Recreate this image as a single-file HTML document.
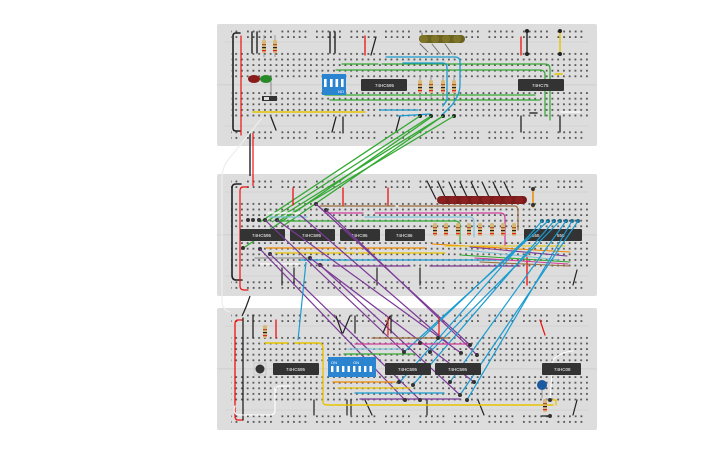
<!DOCTYPE html>
<html><head><meta charset="utf-8"><style>
html,body{margin:0;padding:0;background:#fff;width:725px;height:453px;overflow:hidden}
svg{display:block}
text{font-family:"Liberation Sans",sans-serif}
</style></head><body>
<svg width="725" height="453" viewBox="0 0 725 453" xmlns="http://www.w3.org/2000/svg">
<defs>
<pattern id="h" x="230" y="0" width="5.75" height="5.6" patternUnits="userSpaceOnUse">
<rect x="1" y="1" width="1.8" height="1.8" fill="#555"/></pattern>
<pattern id="r" x="236" y="0" width="34.5" height="5.6" patternUnits="userSpaceOnUse">
<rect x="1" y="1" width="1.8" height="1.8" fill="#555"/><rect x="6.75" y="1" width="1.8" height="1.8" fill="#555"/><rect x="12.5" y="1" width="1.8" height="1.8" fill="#555"/><rect x="18.25" y="1" width="1.8" height="1.8" fill="#555"/><rect x="24" y="1" width="1.8" height="1.8" fill="#555"/></pattern>
<g id="board">
<rect x="0" y="0" width="380" height="122" rx="2" fill="#dddddd"/>
<rect x="0" y="60" width="380" height="1.5" fill="#d4d4d4"/>
<rect x="14" y="6" width="356" height="11" fill="url(#r)"/>
<rect x="14" y="28" width="360" height="28" fill="url(#h)"/>
<rect x="14" y="66" width="360" height="28" fill="url(#h)"/>
<rect x="14" y="104" width="356" height="11" fill="url(#r)"/>
<line x1="8" y1="18" x2="372" y2="18" stroke="#ccc" stroke-width="0.6"/>
<line x1="8" y1="102" x2="372" y2="102" stroke="#ccc" stroke-width="0.6"/>
</g>
<g id="chip"><rect x="0" y="0" width="40" height="12" rx="1" fill="#333"/><circle cx="3" cy="9.5" r="0.9" fill="#ccc"/></g>
<g id="res1"><rect x="262" y="40" width="4" height="13" rx="1.5" fill="#d8b878"/><rect x="262" y="44" width="4" height="1.2" fill="#a52"/><rect x="262" y="47" width="4" height="1.2" fill="#222"/><rect x="262" y="50" width="4" height="1.2" fill="#d22"/></g>
</defs>

<use href="#board" x="217" y="24"/>
<use href="#board" x="217" y="174"/>
<use href="#board" x="217" y="308"/>

<!-- ========== Board 1 ========== -->
<g fill="none" stroke-linecap="round">
<path d="M240 33 H236 Q233 33 233 36 V128 Q233 131 236 131 H240" stroke="#222" stroke-width="1.6"/>
<line x1="241" y1="36" x2="241" y2="135" stroke="#e11" stroke-width="1.2"/>
<line x1="252" y1="32" x2="252" y2="53" stroke="#222" stroke-width="1.4"/>
<line x1="257" y1="32" x2="257" y2="53" stroke="#222" stroke-width="1.4"/>
<line x1="330" y1="32" x2="330" y2="53" stroke="#222" stroke-width="1.4"/>
<line x1="335" y1="32" x2="335" y2="53" stroke="#222" stroke-width="1.4"/>
<line x1="365" y1="36" x2="365" y2="55" stroke="#e11" stroke-width="1.3"/>
<line x1="376" y1="37" x2="371" y2="55" stroke="#222" stroke-width="1.3"/>
<line x1="521" y1="37" x2="521" y2="55" stroke="#e11" stroke-width="1.3"/>
<line x1="527" y1="31" x2="527" y2="54" stroke="#222" stroke-width="1.4"/>
<line x1="560" y1="31" x2="560" y2="54" stroke="#e8c400" stroke-width="1.4"/>
<line x1="271" y1="117" x2="276" y2="130" stroke="#222" stroke-width="1.3"/>
<line x1="336" y1="117" x2="332" y2="132" stroke="#222" stroke-width="1.3"/>
<line x1="343" y1="117" x2="343" y2="133" stroke="#222" stroke-width="1.3"/>
<line x1="400" y1="116" x2="396" y2="131" stroke="#222" stroke-width="1.3"/>
<line x1="521" y1="116" x2="521" y2="132" stroke="#222" stroke-width="1.3"/>
<line x1="560" y1="116" x2="560" y2="132" stroke="#222" stroke-width="1.3"/>
<path d="M342 64 H378 M382 64 H545 Q550 64 550 69 V120" stroke="#3a3" stroke-width="1.2"/>
<path d="M336 70 H540 Q545 70 545 75 V116" stroke="#3a3" stroke-width="1.2"/>
<path d="M325 95 H535" stroke="#3a3" stroke-width="1.2"/>
<path d="M330 100 H540" stroke="#3a3" stroke-width="1.2"/>
<path d="M386 57 H455 Q460 57 460 62 V85 Q460 94 452 105 L442 115" stroke="#1a9bd0" stroke-width="1.3"/>
<path d="M403 63 H443 Q447 63 447 68 V100 L443 106" stroke="#1a9bd0" stroke-width="1.3"/>
<path d="M380 110 H418" stroke="#1a9bd0" stroke-width="1.3"/>
<path d="M398 116 L430 114" stroke="#1a9bd0" stroke-width="1.3"/>
<path d="M253 112 H365" stroke="#e8c400" stroke-width="1.6"/>
<path d="M422 33 L422 38 L428 38 M420 44 L428 52 M432 44 L440 54 M445 44 L452 54" stroke="#777" stroke-width="1"/>
<path d="M561 112 H580" stroke="#fff" stroke-width="1.3"/>
<path d="M555 74 H562" stroke="#e8c400" stroke-width="1.6"/>
<path d="M530 113 H537" stroke="#333" stroke-width="1.6"/>
<path d="M271 82 V95" stroke="#888" stroke-width="1"/>
</g>
<g fill="#6b6420"><rect x="419" y="35" width="46" height="8" rx="4"/></g>
<g fill="#7f7528"><circle cx="424" cy="39" r="4"/><circle cx="435" cy="39" r="4"/><circle cx="446" cy="39" r="4"/><circle cx="457" cy="39" r="4"/></g>
<g fill="#222"><circle cx="527" cy="31" r="2"/><circle cx="527" cy="54" r="2"/><circle cx="560" cy="31" r="2"/><circle cx="560" cy="54" r="2"/>
<circle cx="420" cy="116" r="2"/><circle cx="431" cy="116" r="2"/><circle cx="443" cy="116" r="2"/><circle cx="454" cy="116" r="2"/></g>
<ellipse cx="254" cy="79" rx="6" ry="4" fill="#8a1c1c"/>
<ellipse cx="266" cy="79" rx="6" ry="4" fill="#2a8a2a"/>
<rect x="262" y="96" width="15" height="5" fill="#333"/><rect x="264" y="97" width="5" height="3" fill="#ddd"/>
<rect x="322" y="74" width="24" height="21" fill="#2b84d0"/>
<g fill="#fff"><rect x="324" y="79" width="2.6" height="8"/><rect x="330" y="79" width="2.6" height="8"/><rect x="335.5" y="79" width="2.6" height="8"/><rect x="341" y="79" width="2.6" height="8"/></g>
<text x="338" y="93" font-size="4" fill="#fff">NO</text>
<rect x="361" y="79" width="46" height="12" rx="1" fill="#333"/><text x="375" y="87" font-size="4.5" fill="#fff">74HC595</text>
<rect x="518" y="79" width="46" height="12" rx="1" fill="#333"/><text x="532" y="87" font-size="4.5" fill="#fff">74HC75</text>
<g stroke="#888" stroke-width="0.8"><line x1="264" y1="35" x2="264" y2="57"/><line x1="275" y1="35" x2="275" y2="57"/><line x1="420" y1="75" x2="420" y2="98"/><line x1="431" y1="75" x2="431" y2="98"/><line x1="443" y1="75" x2="443" y2="98"/><line x1="454" y1="75" x2="454" y2="98"/></g>
<use href="#res1"/>
<use href="#res1" x="11" y="0"/>
<use href="#res1" x="156" y="40"/><use href="#res1" x="167" y="40"/><use href="#res1" x="179" y="40"/><use href="#res1" x="190" y="40"/>
<use href="#res1" x="1" y="285"/>

<g fill="none">
<path d="M250 133 V176" stroke="#222" stroke-width="1.4"/>
<path d="M253 133 V186" stroke="#e11" stroke-width="1.2"/>
<path d="M262 118 L228 160 Q222 168 222 178 V300 Q222 310 230 312" stroke="#eee" stroke-width="1.2"/>
<path d="M250 296 Q246 308 242 316" stroke="#222" stroke-width="1.2"/>
<g stroke="#3a3" stroke-width="1.3"><path d="M420 116 L260 222"/><path d="M431 116 L266 222"/><path d="M443 116 L272 222"/><path d="M454 116 L277 222"/><path d="M443 116 L283 226"/><path d="M430 118 L245 247"/></g>
</g>

<!-- ========== Board 2 ========== -->
<g fill="none" stroke-linecap="round">
<path d="M241 184 H236 Q232 184 232 188 V275 Q232 280 236 280 H242" stroke="#222" stroke-width="1.6"/>
<path d="M248 187 H243 Q240 187 240 191 V286 Q240 290 244 290 H248" stroke="#e11" stroke-width="1.2"/>
<g stroke="#e11" stroke-width="1.3"><line x1="293" y1="188" x2="293" y2="205"/><line x1="343" y1="188" x2="343" y2="206"/><line x1="388" y1="188" x2="388" y2="205"/><line x1="527" y1="256" x2="527" y2="285"/></g>
<g stroke="#222" stroke-width="1.2"><line x1="427" y1="181" x2="436" y2="199"/><line x1="438" y1="182" x2="446" y2="199"/><line x1="449" y1="182" x2="457" y2="199"/><line x1="460" y1="182" x2="468" y2="199"/><line x1="471" y1="182" x2="479" y2="199"/><line x1="482" y1="182" x2="490" y2="199"/><line x1="493" y1="182" x2="501" y2="199"/><line x1="504" y1="182" x2="512" y2="199"/>
<line x1="282" y1="268" x2="282" y2="285"/><line x1="294" y1="268" x2="294" y2="285"/><line x1="377" y1="268" x2="377" y2="285"/><line x1="420" y1="268" x2="420" y2="285"/><line x1="577" y1="270" x2="573" y2="285"/></g>
<path d="M533 189 V207" stroke="#f08a00" stroke-width="1.5"/>
<path d="M320 206 H395 M399 206 H515 Q518 206 518 212 V230" stroke="#9a6b3c" stroke-width="1.2"/>
<path d="M325 213 H363 M375 213 H500 Q505 213 505 218 V245" stroke="#d23c9c" stroke-width="1.2"/>
<path d="M268 213 H300" stroke="#fff" stroke-width="1.2"/>
<path d="M270 217 H307 M365 217 H470 Q474 217 474 222 V237" stroke="#7fc4d8" stroke-width="1.2"/>
<path d="M278 221 H352 M355 221 H455 Q460 221 460 226 V242" stroke="#3a3" stroke-width="1.2"/>
<path d="M266 248 H345 M350 248 H425" stroke="#f08a00" stroke-width="1.2"/>
<path d="M275 253 H355 M358 253 H445" stroke="#e8c400" stroke-width="1.2"/>
<path d="M255 258 H310" stroke="#999" stroke-width="1.2"/>
<path d="M260 264 H300" stroke="#fff" stroke-width="1.2"/>
<path d="M333 266 H410 M430 266 H520" stroke="#7b3a96" stroke-width="1.2"/>
<path d="M300 260 H510" stroke="#1a9bd0" stroke-width="1.2"/>
<g stroke-width="1.1"><path d="M432 244 L570 252" stroke="#f08a00"/><path d="M445 246 L565 246" stroke="#e8c400"/><path d="M470 247 L567 256" stroke="#7b3a96"/><path d="M460 255 L570 262" stroke="#3a3"/><path d="M475 258 L568 264" stroke="#d23c9c"/><path d="M480 262 L570 266" stroke="#9a6b3c"/><path d="M465 250 L560 260" stroke="#7fc4d8"/></g>
</g>
<rect x="437" y="196" width="90" height="8" rx="4" fill="#7a1c1c"/>
<g fill="#8a2020"><circle cx="442" cy="200" r="4"/><circle cx="453" cy="200" r="4"/><circle cx="464" cy="200" r="4"/><circle cx="475" cy="200" r="4"/><circle cx="486" cy="200" r="4"/><circle cx="497" cy="200" r="4"/><circle cx="508" cy="200" r="4"/><circle cx="519" cy="200" r="4"/></g>
<use href="#res1" x="171" y="183"/><use href="#res1" x="182" y="183"/><use href="#res1" x="194" y="183"/><use href="#res1" x="205" y="183"/><use href="#res1" x="216" y="183"/><use href="#res1" x="228" y="183"/><use href="#res1" x="239" y="183"/><use href="#res1" x="250" y="183"/>
<rect x="240" y="229" width="45" height="12" rx="1" fill="#333"/><text x="252" y="237" font-size="4.5" fill="#fff">74HC595</text>
<rect x="290" y="229" width="45" height="12" rx="1" fill="#333"/><text x="302" y="237" font-size="4.5" fill="#fff">74HC595</text>
<rect x="340" y="229" width="40" height="12" rx="1" fill="#333"/><text x="351" y="237" font-size="4.5" fill="#fff">74HC86</text>
<rect x="385" y="229" width="40" height="12" rx="1" fill="#333"/><text x="396" y="237" font-size="4.5" fill="#fff">74HC86</text>
<rect x="524" y="229" width="58" height="12" rx="1" fill="#333"/><text x="532" y="237" font-size="4.5" fill="#fff">555</text><text x="557" y="237" font-size="4.5" fill="#fff">558</text>
<g fill="#333"><circle cx="533" cy="189" r="2"/><circle cx="533" cy="205" r="2"/>
<circle cx="248" cy="220" r="2"/><circle cx="253" cy="220" r="2"/><circle cx="259" cy="220" r="2"/><circle cx="265" cy="220" r="2"/><circle cx="277" cy="220" r="2"/><circle cx="316" cy="204" r="2"/><circle cx="326" cy="210" r="2"/>
<circle cx="243" cy="248" r="2"/><circle cx="260" cy="249" r="2"/><circle cx="270" cy="254" r="2"/><circle cx="310" cy="258" r="2"/><circle cx="320" cy="265" r="2"/></g>
<g fill="#1a6a8a"><circle cx="542" cy="221" r="2"/><circle cx="548" cy="221" r="2"/><circle cx="554" cy="221" r="2"/><circle cx="560" cy="221" r="2"/><circle cx="566" cy="221" r="2"/><circle cx="572" cy="221" r="2"/><circle cx="578" cy="221" r="2"/></g>

<g fill="none" stroke-width="1.2">
<g stroke="#7b3a96"><path d="M316 204 L470 345"/><path d="M326 210 L477 355"/><path d="M277 220 L461 353"/><path d="M260 249 L405 400"/><path d="M270 254 L420 400"/><path d="M310 258 L474 382"/><path d="M320 265 L460 395"/><path d="M265 220 L404 352"/><path d="M300 215 L450 345"/></g>
<g stroke="#1a9bd0"><path d="M542 221 L399 383"/><path d="M548 221 L404 352"/><path d="M554 221 L413 385"/><path d="M560 221 L430 352"/><path d="M566 221 L450 382"/><path d="M572 221 L467 400"/><path d="M578 221 L460 395"/><path d="M530 235 L420 340"/><path d="M306 262 L298 340"/></g>
</g>

<!-- ========== Board 3 ========== -->
<g fill="none" stroke-linecap="round">
<path d="M242 320 H238 Q235 320 235 324 V416 Q235 420 238 420 H243" stroke="#e11" stroke-width="1.3"/>
<line x1="243" y1="318" x2="243" y2="420" stroke="#222" stroke-width="1.3"/>
<line x1="253" y1="315" x2="253" y2="338" stroke="#222" stroke-width="1.3"/>
<line x1="276" y1="320" x2="276" y2="338" stroke="#e11" stroke-width="1.3"/>
<g stroke="#222" stroke-width="1.2"><line x1="336" y1="316" x2="342" y2="333"/><line x1="350" y1="316" x2="343" y2="333"/><line x1="355" y1="316" x2="355" y2="333"/><line x1="391" y1="316" x2="391" y2="333"/>
<line x1="314" y1="400" x2="314" y2="415"/><line x1="347" y1="400" x2="347" y2="415"/><line x1="351" y1="400" x2="351" y2="415"/><line x1="365" y1="400" x2="372" y2="415"/><line x1="427" y1="400" x2="427" y2="415"/><line x1="478" y1="400" x2="484" y2="415"/><line x1="577" y1="400" x2="573" y2="415"/><line x1="390" y1="316" x2="383" y2="333"/></g>
<g stroke="#e11" stroke-width="1.2"><line x1="388" y1="318" x2="388" y2="335"/><line x1="439" y1="318" x2="439" y2="335"/><line x1="540" y1="320" x2="545" y2="335"/></g>
<path d="M265 343 H288 M295 343 H318 Q323 343 323 348 V402 Q323 405 328 405 H553" stroke="#e8c400" stroke-width="1.4"/>
<path d="M372 338 H450" stroke="#9a6b3c" stroke-width="1.3"/>
<path d="M355 344 H470" stroke="#d23c9c" stroke-width="1.3"/>
<path d="M348 349 H400" stroke="#7fc4d8" stroke-width="1.3"/>
<path d="M344 354 H415" stroke="#3a3" stroke-width="1.3"/>
<path d="M333 382 H395" stroke="#f08a00" stroke-width="1.3"/>
<path d="M338 388 H410" stroke="#e8c400" stroke-width="1.3"/>
<path d="M355 393 H444" stroke="#1a9bd0" stroke-width="1.3"/>
<path d="M360 399 H460" stroke="#7b3a96" stroke-width="1.3"/>
<path d="M276 390 Q276 386 280 386 H290 M235 406 Q232 415 240 415 H270 Q275 415 275 410 V387" stroke="#fff" stroke-width="1.1"/>
<path d="M573 351 Q560 352 553 360 L550 400" stroke="#fff" stroke-width="1"/>
<path d="M549 400 H556 V405" stroke="#e8c400" stroke-width="1.3"/>
<path d="M542 416 H550" stroke="#222" stroke-width="1.3"/>
</g>
<circle cx="260" cy="369" r="4.5" fill="#333"/><rect x="254" y="363" width="12" height="12" fill="none" stroke="#bbb" stroke-width="0.6"/>
<rect x="273" y="363" width="46" height="12" rx="1" fill="#333"/><text x="286" y="371" font-size="4.5" fill="#fff">74HC595</text>
<rect x="328" y="357" width="48" height="20" fill="#2b84d0"/>
<text x="331" y="364" font-size="4" fill="#fff">ON</text><text x="353" y="364" font-size="4" fill="#fff">ON</text>
<g fill="#fff"><rect x="331" y="366" width="2.4" height="6"/><rect x="336.5" y="366" width="2.4" height="6"/><rect x="342" y="366" width="2.4" height="6"/><rect x="347.5" y="366" width="2.4" height="6"/><rect x="353" y="366" width="2.4" height="6"/><rect x="358.5" y="366" width="2.4" height="6"/><rect x="364" y="366" width="2.4" height="6"/><rect x="369.5" y="366" width="2.4" height="6"/></g>
<rect x="385" y="363" width="46" height="12" rx="1" fill="#333"/><text x="398" y="371" font-size="4.5" fill="#fff">74HC595</text>
<rect x="435" y="363" width="46" height="12" rx="1" fill="#333"/><text x="448" y="371" font-size="4.5" fill="#fff">74HC595</text>
<rect x="542" y="363" width="39" height="12" rx="1" fill="#333"/><text x="554" y="371" font-size="4.5" fill="#fff">74HC08</text>
<circle cx="542" cy="385" r="5" fill="#1b5aa0"/><line x1="542" y1="390" x2="542" y2="398" stroke="#888" stroke-width="0.8"/>
<use href="#res1" x="281" y="359"/>
<g fill="#333"><circle cx="404" cy="352" r="2"/><circle cx="420" cy="343" r="2"/><circle cx="438" cy="338" r="2"/><circle cx="461" cy="353" r="2"/><circle cx="470" cy="345" r="2"/><circle cx="477" cy="355" r="2"/><circle cx="430" cy="352" r="2"/><circle cx="399" cy="382" r="2"/><circle cx="413" cy="385" r="2"/><circle cx="450" cy="382" r="2"/><circle cx="460" cy="395" r="2"/><circle cx="467" cy="400" r="2"/><circle cx="405" cy="400" r="2"/><circle cx="420" cy="400" r="2"/><circle cx="474" cy="382" r="2"/><circle cx="550" cy="400" r="2"/><circle cx="550" cy="416" r="2"/></g>
</svg>
</body></html>
